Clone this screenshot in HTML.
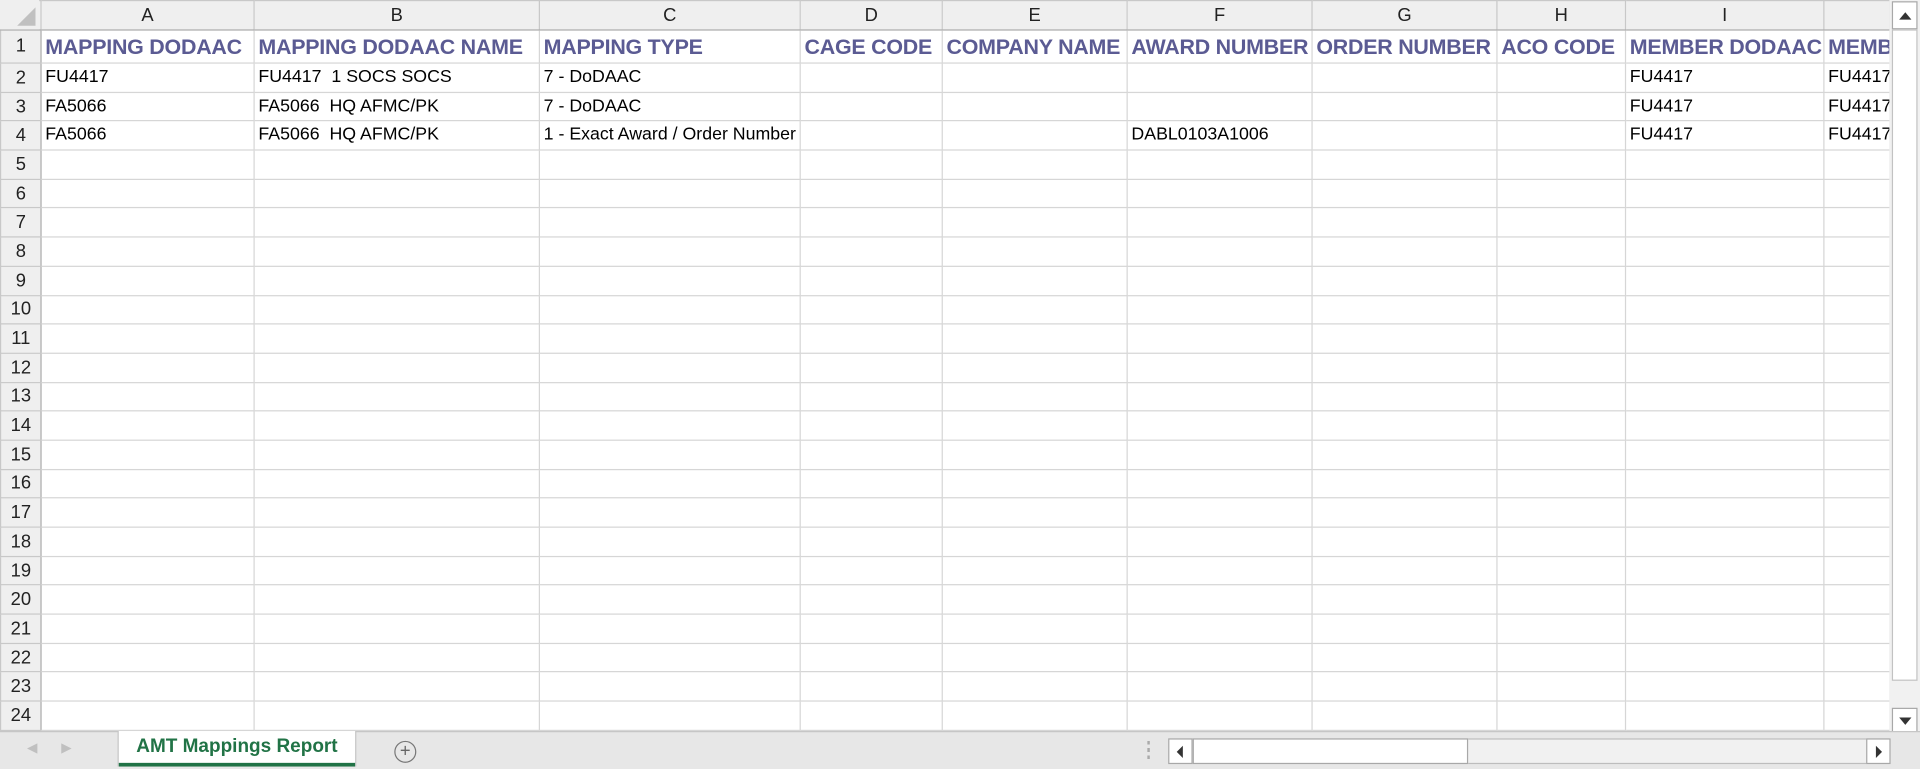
<!DOCTYPE html>
<html><head><meta charset="utf-8"><style>
html,body{margin:0;padding:0;width:1920px;height:768px;overflow:hidden;background:#fff}
#w{position:absolute;left:0;top:0;width:1568px;height:627px;transform:scale(1.22449);transform-origin:0 0;font-family:"Liberation Sans",Arial,sans-serif;background:#fff}
table{position:absolute;left:0;top:0;border-collapse:collapse;table-layout:fixed;width:1543px}
td{border:1px solid #d6d6d6;padding:0 0 0 3px;white-space:nowrap;overflow:hidden;font-size:14.5px;color:#000;height:22.7px;line-height:21px}
tr.ch td{background:#efefef;height:23px;text-align:center;padding:0;font-size:15px;color:#222;border-color:#c8c8c8;border-bottom:1px solid #ababab}
td.rh{background:#efefef;text-align:center;padding:0;font-size:15px;color:#222;border-color:#c8c8c8;border-right:1px solid #ababab}
tr.h td{height:26px;font-weight:bold;color:#5b5b93;font-size:17.5px;line-height:26px;letter-spacing:-0.2px}
tr.h td.rh{color:#222;font-weight:normal;font-size:15px;letter-spacing:0}
#corner{position:absolute;left:0;top:0;width:32px;height:24px;background:#efefef}
#corner:after{content:"";position:absolute;right:3px;bottom:3px;border-left:15px solid transparent;border-bottom:15px solid #c0c0c0}
#bb{position:absolute;left:0;top:597px;width:1568px;height:30px;background:#e7e7e7;border-top:1px solid #c6c6c6}
#tab{position:absolute;left:97px;top:-1px;width:193px;height:26px;background:#fff;border-bottom:3px solid #217346;color:#217346;font-weight:bold;font-size:15.5px;text-align:center;line-height:26px;box-shadow:1px 0 0 #c6c6c6,-1px 0 0 #c6c6c6}
#plus{position:absolute;left:322px;top:7px;width:16px;height:16px;border:1px solid #777;border-radius:50%;color:#666;font-size:15px;line-height:15px;text-align:center}
.nav{position:absolute;top:6px;color:#c0c0c0;font-size:11px}
#hs{position:absolute;left:954px;top:5px;width:589px;height:21px;background:#f1f1f1;border:1px solid #bdbdbd;box-sizing:border-box}
#vs{position:absolute;left:1543px;top:0;width:25px;height:597px;background:#f1f1f1}
.btn{position:absolute;background:#fff;border:1px solid #a8a8a8;box-sizing:border-box}
</style></head><body><div id="w">
<table>
<colgroup><col style="width:33px"><col style="width:174px"><col style="width:233px"><col style="width:213px"><col style="width:116px"><col style="width:151px"><col style="width:151px"><col style="width:151px"><col style="width:105px"><col style="width:162px"><col style="width:54px"></colgroup>
<tr class="ch"><td></td><td>A</td><td>B</td><td>C</td><td>D</td><td>E</td><td>F</td><td>G</td><td>H</td><td>I</td><td></td></tr>
<tr class="h"><td class="rh">1</td><td>MAPPING DODAAC</td><td>MAPPING DODAAC NAME</td><td>MAPPING TYPE</td><td>CAGE CODE</td><td>COMPANY NAME</td><td>AWARD NUMBER</td><td>ORDER NUMBER</td><td>ACO CODE</td><td>MEMBER DODAAC</td><td>MEMBER</td></tr>
<tr><td class="rh">2</td><td>FU4417</td><td>FU4417&nbsp; 1 SOCS SOCS</td><td>7 - DoDAAC</td><td></td><td></td><td></td><td></td><td></td><td>FU4417</td><td>FU4417</td></tr>
<tr><td class="rh">3</td><td>FA5066</td><td>FA5066&nbsp; HQ AFMC/PK</td><td>7 - DoDAAC</td><td></td><td></td><td></td><td></td><td></td><td>FU4417</td><td>FU4417</td></tr>
<tr><td class="rh">4</td><td>FA5066</td><td>FA5066&nbsp; HQ AFMC/PK</td><td>1 - Exact Award / Order Number</td><td></td><td></td><td>DABL0103A1006</td><td></td><td></td><td>FU4417</td><td>FU4417</td></tr>
<tr><td class="rh">5</td><td></td><td></td><td></td><td></td><td></td><td></td><td></td><td></td><td></td><td></td></tr>
<tr><td class="rh">6</td><td></td><td></td><td></td><td></td><td></td><td></td><td></td><td></td><td></td><td></td></tr>
<tr><td class="rh">7</td><td></td><td></td><td></td><td></td><td></td><td></td><td></td><td></td><td></td><td></td></tr>
<tr><td class="rh">8</td><td></td><td></td><td></td><td></td><td></td><td></td><td></td><td></td><td></td><td></td></tr>
<tr><td class="rh">9</td><td></td><td></td><td></td><td></td><td></td><td></td><td></td><td></td><td></td><td></td></tr>
<tr><td class="rh">10</td><td></td><td></td><td></td><td></td><td></td><td></td><td></td><td></td><td></td><td></td></tr>
<tr><td class="rh">11</td><td></td><td></td><td></td><td></td><td></td><td></td><td></td><td></td><td></td><td></td></tr>
<tr><td class="rh">12</td><td></td><td></td><td></td><td></td><td></td><td></td><td></td><td></td><td></td><td></td></tr>
<tr><td class="rh">13</td><td></td><td></td><td></td><td></td><td></td><td></td><td></td><td></td><td></td><td></td></tr>
<tr><td class="rh">14</td><td></td><td></td><td></td><td></td><td></td><td></td><td></td><td></td><td></td><td></td></tr>
<tr><td class="rh">15</td><td></td><td></td><td></td><td></td><td></td><td></td><td></td><td></td><td></td><td></td></tr>
<tr><td class="rh">16</td><td></td><td></td><td></td><td></td><td></td><td></td><td></td><td></td><td></td><td></td></tr>
<tr><td class="rh">17</td><td></td><td></td><td></td><td></td><td></td><td></td><td></td><td></td><td></td><td></td></tr>
<tr><td class="rh">18</td><td></td><td></td><td></td><td></td><td></td><td></td><td></td><td></td><td></td><td></td></tr>
<tr><td class="rh">19</td><td></td><td></td><td></td><td></td><td></td><td></td><td></td><td></td><td></td><td></td></tr>
<tr><td class="rh">20</td><td></td><td></td><td></td><td></td><td></td><td></td><td></td><td></td><td></td><td></td></tr>
<tr><td class="rh">21</td><td></td><td></td><td></td><td></td><td></td><td></td><td></td><td></td><td></td><td></td></tr>
<tr><td class="rh">22</td><td></td><td></td><td></td><td></td><td></td><td></td><td></td><td></td><td></td><td></td></tr>
<tr><td class="rh">23</td><td></td><td></td><td></td><td></td><td></td><td></td><td></td><td></td><td></td><td></td></tr>
<tr><td class="rh">24</td><td></td><td></td><td></td><td></td><td></td><td></td><td></td><td></td><td></td><td></td></tr>
<tr><td class="rh">25</td><td></td><td></td><td></td><td></td><td></td><td></td><td></td><td></td><td></td><td></td></tr>
</table>
<div id="corner"></div>
<div id="vs">
 <div class="btn" style="left:2px;top:1px;width:21px;height:23px"><div style="position:absolute;left:5px;top:8px;border-left:5px solid transparent;border-right:5px solid transparent;border-bottom:6px solid #333"></div></div>
 <div class="btn" style="left:2px;top:24px;width:21px;height:532px;border-color:#c2c2c2"></div>
 <div class="btn" style="left:2px;top:578px;width:21px;height:20px"><div style="position:absolute;left:5px;top:7px;border-left:5px solid transparent;border-right:5px solid transparent;border-top:6px solid #333"></div></div>
</div>
<div id="bb">
 <div class="nav" style="left:22px">&#9664;</div><div class="nav" style="left:50px">&#9654;</div>
 <div id="tab">AMT Mappings Report</div>
 <div id="plus">+</div>
 <div style="position:absolute;left:937px;top:7px;width:2px;height:16px;background:repeating-linear-gradient(#aaa 0 3px,transparent 3px 6px)"></div>
 <div id="hs">
  <div class="btn" style="left:-1px;top:-1px;width:20px;height:21px"><div style="position:absolute;left:6px;top:5px;border-top:5px solid transparent;border-bottom:5px solid transparent;border-right:5px solid #333"></div></div>
  <div class="btn" style="left:19px;top:-1px;width:225px;height:21px"></div>
  <div class="btn" style="left:569px;top:-1px;width:20px;height:21px"><div style="position:absolute;left:7px;top:5px;border-top:5px solid transparent;border-bottom:5px solid transparent;border-left:5px solid #333"></div></div>
 </div>
</div>
</div></body></html>
